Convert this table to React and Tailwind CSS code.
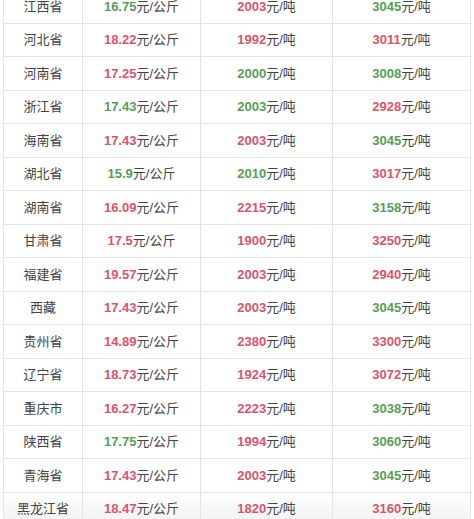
const RED = 'r';
const GREEN = 'g';

const rows = [
  ['江西省', '16.75', GREEN, '2003', RED, '3045', GREEN],
  ['河北省', '18.22', RED, '1992', RED, '3011', RED],
  ['河南省', '17.25', RED, '2000', GREEN, '3008', GREEN],
  ['浙江省', '17.43', GREEN, '2003', GREEN, '2928', RED],
  ['海南省', '17.43', RED, '2003', RED, '3045', GREEN],
  ['湖北省', '15.9', GREEN, '2010', GREEN, '3017', RED],
  ['湖南省', '16.09', RED, '2215', RED, '3158', GREEN],
  ['甘肃省', '17.5', RED, '1900', RED, '3250', RED],
  ['福建省', '19.57', RED, '2003', RED, '2940', RED],
  ['西藏', '17.43', RED, '2003', RED, '3045', GREEN],
  ['贵州省', '14.89', RED, '2380', RED, '3300', RED],
  ['辽宁省', '18.73', RED, '1924', RED, '3072', RED],
  ['重庆市', '16.27', RED, '2223', RED, '3038', GREEN],
  ['陕西省', '17.75', GREEN, '1994', RED, '3060', GREEN],
  ['青海省', '17.43', RED, '2003', RED, '3045', GREEN],
  ['黑龙江省', '18.47', RED, '1820', RED, '3160', RED],
];

const Price = ({ value, tone, unit }) => (
  <span>
    <span className={`font-bold ${tone === GREEN ? 'text-[#55a055]' : 'text-[#d9546a]'}`}>{value}</span>
    <span className="text-[#444]">{unit}</span>
  </span>
);

const Cell = ({ children }) => (
  <div className="flex items-center justify-center border-r border-b border-[#e4e4e4]">{children}</div>
);

export default function App() {
  return (
    <div
      className="w-[474px] h-[519px] overflow-hidden bg-white text-[13px] text-[#444]"
      style={{ fontFamily: '"Liberation Sans", Arial, "Noto Sans CJK SC", sans-serif' }}
    >
      <div className="ml-[3px] -mt-[10px] w-[467px] border-l border-[#e4e4e4]">
        {rows.map(([name, kg, kgTone, t1, t1Tone, t2, t2Tone], i) => (
          <div
            key={name}
            className={`grid grid-cols-[79px_118px_132px_138px] h-[33.5px] ${
              i === rows.length - 1 ? 'bg-gradient-to-b from-white to-[#f0f0f0]' : ''
            }`}
          >
            <Cell>{name}</Cell>
            <Cell>
              <Price value={kg} tone={kgTone} unit="元/公斤" />
            </Cell>
            <Cell>
              <Price value={t1} tone={t1Tone} unit="元/吨" />
            </Cell>
            <Cell>
              <Price value={t2} tone={t2Tone} unit="元/吨" />
            </Cell>
          </div>
        ))}
      </div>
    </div>
  );
}
